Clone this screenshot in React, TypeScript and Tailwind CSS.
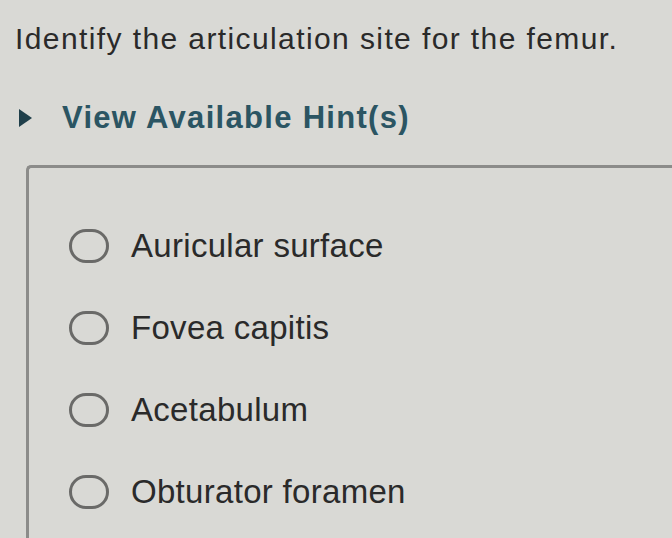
const options = ['Auricular surface', 'Fovea capitis', 'Acetabulum', 'Obturator foramen'];

export default function App() {
  return (
    <div className="w-[672px] h-[538px] overflow-hidden bg-[#d9d9d5] font-['Liberation_Sans',Arial,sans-serif] text-[#2a2a2a]">
      <h1 className="pl-[15px] pt-[21px] text-[30px] leading-[36px] tracking-[1.4px]">
        Identify the articulation site for the femur.
      </h1>
      <button className="mt-[42px] ml-[19px] flex items-center gap-[30px] text-[#2b5563]">
        <svg width="13" height="18" viewBox="0 0 13 18">
          <path d="M0 0 L13 9 L0 18 Z" fill="#1f3f4a" />
        </svg>
        <span className="text-[31px] font-bold leading-[38px] tracking-[1.3px]">View Available Hint(s)</span>
      </button>
      <div className="mt-[28px] ml-[26px] h-[400px] border-l-[3px] border-t-[3px] border-[#8c8c8a] rounded-tl-[5px]">
        <div className="pt-[58px] pl-[40px] flex flex-col gap-[42px]">
          {options.map(o => (
            <label key={o} className="flex items-center gap-[22px]">
              <span className="w-[40px] h-[34px] rounded-full border-[3px] border-[#6a6a68]" />
              <span className="text-[33px] leading-[40px] tracking-[0.3px]">{o}</span>
            </label>
          ))}
        </div>
      </div>
    </div>
  );
}
